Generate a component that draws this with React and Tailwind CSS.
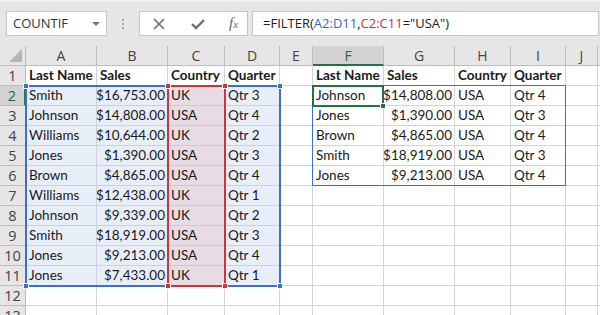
const cols = ['', 'A', 'B', 'C', 'D', 'E', 'F', 'G', 'H', 'I', 'J', '']

const left = [
  ['Smith', '$16,753.00', 'UK', 'Qtr 3'],
  ['Johnson', '$14,808.00', 'USA', 'Qtr 4'],
  ['Williams', '$10,644.00', 'UK', 'Qtr 2'],
  ['Jones', '$1,390.00', 'USA', 'Qtr 3'],
  ['Brown', '$4,865.00', 'USA', 'Qtr 4'],
  ['Williams', '$12,438.00', 'UK', 'Qtr 1'],
  ['Johnson', '$9,339.00', 'UK', 'Qtr 2'],
  ['Smith', '$18,919.00', 'USA', 'Qtr 3'],
  ['Jones', '$9,213.00', 'USA', 'Qtr 4'],
  ['Jones', '$7,433.00', 'UK', 'Qtr 1'],
]

const right = [
  ['Johnson', '$14,808.00', 'USA', 'Qtr 4'],
  ['Jones', '$1,390.00', 'USA', 'Qtr 3'],
  ['Brown', '$4,865.00', 'USA', 'Qtr 4'],
  ['Smith', '$18,919.00', 'USA', 'Qtr 3'],
  ['Jones', '$9,213.00', 'USA', 'Qtr 4'],
]

const headers = ['Last Name', 'Sales', 'Country', 'Quarter']

function rowCells(r) {
  // r: 1-based row number, returns 11 cells (A..K)
  const cells = Array(11).fill({ text: '' })
  if (r === 1) {
    headers.forEach((h, i) => {
      cells[i] = { text: h, bold: true }
      cells[i + 5] = { text: h, bold: true }
    })
  }
  if (r >= 2 && r <= 11) {
    left[r - 2].forEach((v, i) => {
      cells[i] = { text: v, num: i === 1, fill: i === 2 ? 'red' : 'blue' }
    })
  }
  if (r >= 2 && r <= 6) {
    right[r - 2].forEach((v, i) => {
      cells[i + 5] = { text: v, num: i === 1 }
    })
  }
  return cells
}

function Handle({ x, y, color }) {
  return (
    <div
      className={`absolute w-[6px] h-[6px] border border-white ${color === 'red' ? 'bg-[#c8353c]' : color === 'green' ? 'bg-[#217346]' : 'bg-[#3f6fc6]'}`}
      style={{ left: x - 3, top: y - 3 }}
    />
  )
}

export default function App() {
  const rows = Array.from({ length: 13 }, (_, i) => i + 1)

  return (
    <div className="w-[600px] h-[315px] overflow-hidden bg-white font-['Lato',sans-serif] text-[#1a1a1a]">
      {/* toolbar */}
      <div className="h-[46px] bg-[#e6e6e6] border-t-2 border-[#f2f2f2] flex items-start pt-[9px]">
        <div className="ml-[6px] w-[101px] h-[25px] bg-white border border-[#c6c6c6] flex items-center pl-[6px] pr-[6px] font-['Open_Sans',sans-serif] text-[13px] text-[#333]">
          <span className="flex-1">COUNTIF</span>
          <span className="w-0 h-0 border-l-[4px] border-r-[4px] border-t-[4px] border-l-transparent border-r-transparent border-t-[#777]" />
        </div>
        <div className="w-[32px] h-[25px] flex flex-col items-center justify-center gap-[2px]">
          <span className="w-[2px] h-[2px] bg-[#a8a8a8]" />
          <span className="w-[2px] h-[2px] bg-[#a8a8a8]" />
          <span className="w-[2px] h-[2px] bg-[#a8a8a8]" />
        </div>
        <div className="w-[109px] h-[25px] bg-white border border-[#c6c6c6] flex items-center text-[#6e6e6e]">
          <svg className="ml-[13px]" width="12" height="12" viewBox="0 0 12 12">
            <path d="M1 1 L11 11 M11 1 L1 11" stroke="#6e6e6e" strokeWidth="1.6" fill="none" />
          </svg>
          <svg className="ml-[26px]" width="14" height="12" viewBox="0 0 14 12">
            <path d="M1 6 L5 10 L13 2" stroke="#6e6e6e" strokeWidth="2.4" fill="none" />
          </svg>
          <span className="ml-[24px] font-['Liberation_Serif',serif] italic text-[15px] text-[#666] leading-none">
            f<span className="text-[11px]">x</span>
          </span>
        </div>
        <div className="ml-[4px] w-[347px] h-[25px] bg-white border border-[#c6c6c6] flex items-center pl-[10px] font-['Open_Sans',sans-serif] text-[13px] text-[#222] whitespace-nowrap">
          =FILTER(<span className="text-[#3a66c0]">A2:D11</span>,<span className="text-[#c8333b]">C2:C11</span>="USA")
        </div>
      </div>

      {/* sheet */}
      <div className="relative">
        <div className="grid grid-cols-[26px_71px_71px_57px_55px_33px_71px_71px_56px_55px_32px_1fr] auto-rows-[20px]">
          {cols.map((c, i) => (
            <div
              key={'h' + i}
              className={`relative flex items-center justify-center border-r border-b font-['Open_Sans',sans-serif] text-[14px] ${
                i === 6
                  ? 'bg-[#d2d2d2] border-b-2 border-b-[#217346] border-r-[#bdbdbd] text-[#1e6b41]'
                  : 'bg-[#e6e6e6] border-[#bdbdbd] text-[#444]'
              }`}
            >
              {i === 0 ? (
                <svg className="absolute right-[3px] bottom-[3px]" width="13" height="13" viewBox="0 0 13 13">
                  <path d="M13 0 L13 13 L0 13 Z" fill="#b5b5b5" />
                </svg>
              ) : (
                c
              )}
            </div>
          ))}
          {rows.map(r => {
            const cells = rowCells(r)
            return [
              <div
                key={'n' + r}
                className={`flex items-center justify-center border-b font-['Open_Sans',sans-serif] text-[14.5px] ${
                  r === 2
                    ? 'bg-[#d2d2d2] border-r-2 border-r-[#217346] border-b-[#bdbdbd] text-[#1e6b41]'
                    : 'bg-[#e6e6e6] border-r border-[#bdbdbd] text-[#444]'
                }`}
              >
                {r}
              </div>,
              ...cells.map((cell, i) => (
                <div
                  key={r + '-' + i}
                  className={`flex items-center border-r border-b text-[13.5px] leading-none whitespace-nowrap overflow-visible ${
                    cell.num ? 'justify-end pr-[2px]' : 'pl-[3px]'
                  } ${cell.bold ? 'font-bold' : ''} ${
                    cell.fill === 'red'
                      ? 'bg-[#e8dce4] border-[#cfc8d0]'
                      : cell.fill === 'blue'
                      ? 'bg-[#e8eef8] border-[#ccd2dc]'
                      : 'border-[#d4d4d4]'
                  }`}
                >
                  {cell.text}
                </div>
              )),
            ]
          })}
        </div>

        {/* A2:D11 reference */}
        <div className="absolute left-[25px] top-[39px] w-[256px] h-[202px] border-2 border-[#3f6fc6]" />
        {/* C2:C11 reference */}
        <div className="absolute left-[167px] top-[39px] w-[59px] h-[202px] border-2 border-[#c8353c]" />
        <Handle x={26} y={40} color="blue" />
        <Handle x={280} y={40} color="blue" />
        <Handle x={26} y={240} color="blue" />
        <Handle x={280} y={240} color="blue" />
        <Handle x={168} y={40} color="red" />
        <Handle x={225} y={40} color="red" />
        <Handle x={168} y={240} color="red" />
        <Handle x={225} y={240} color="red" />

        {/* spill range */}
        <div className="absolute left-[312px] top-[39px] w-[254px] h-[101px] border border-[#3f6fc6]" />
        {/* active cell */}
        <div className="absolute left-[312px] top-[39px] w-[72px] h-[22px] border-2 border-[#217346]" />
        <Handle x={383} y={60} color="green" />
      </div>
    </div>
  )
}
